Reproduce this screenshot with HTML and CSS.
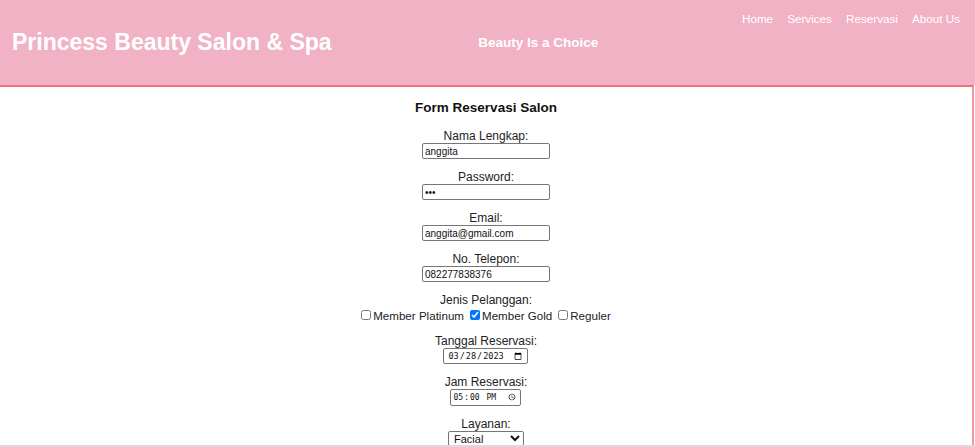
FILE: index.html
```html
<!DOCTYPE html>
<html lang="id">
<head>
<meta charset="utf-8">
<title>Princess Beauty Salon &amp; Spa</title>
<link rel="stylesheet" href="styles.css">
</head>
<body>
<header class="site-header">
  <h1 class="brand">Princess Beauty Salon &amp; Spa</h1>
  <p class="tagline">Beauty Is a Choice</p>
  <nav class="nav">
    <a href="#">Home</a>
    <a href="#">Services</a>
    <a href="#">Reservasi</a>
    <a href="#">About Us</a>
  </nav>
</header>
<main class="content">
  <h2 class="form-title">Form Reservasi Salon</h2>
  <form class="form">
    <div class="group">
      <label class="label" for="nama">Nama Lengkap:</label>
      <input class="field" id="nama" type="text" value="anggita">
    </div>
    <div class="group">
      <label class="label" for="pass">Password:</label>
      <input class="field" id="pass" type="password" value="123">
    </div>
    <div class="group">
      <label class="label" for="email">Email:</label>
      <input class="field" id="email" type="email" value="anggita@gmail.com">
    </div>
    <div class="group">
      <label class="label" for="tel">No. Telepon:</label>
      <input class="field" id="tel" type="tel" value="082277838376">
    </div>
    <div class="group">
      <span class="label">Jenis Pelanggan:</span>
      <div class="checks">
        <label class="check"><input type="checkbox">Member Platinum</label>
        <label class="check"><input type="checkbox" checked>Member Gold</label>
        <label class="check"><input type="checkbox">Reguler</label>
      </div>
    </div>
    <div class="group">
      <label class="label" for="tgl">Tanggal Reservasi:</label>
      <input class="field date" id="tgl" type="date" value="2023-03-28">
    </div>
    <div class="group">
      <label class="label" for="jam">Jam Reservasi:</label>
      <input class="field time" id="jam" type="time" value="17:00">
    </div>
    <div class="group">
      <label class="label" for="layanan">Layanan:</label>
      <select class="field select" id="layanan">
        <option>Facial</option>
        <option>Hair Spa</option>
        <option>Manicure</option>
      </select>
    </div>
  </form>
</main>
<div class="window-edge"></div>
</body>
</html>
```

FILE: styles.css
```css
html, body {
  margin: 0;
  padding: 0;
  background: #ffffff;
}

body {
  font-family: "Liberation Sans", Arial, sans-serif;
  color: #222222;
  overflow: hidden;
}

.site-header {
  display: flex;
  justify-content: space-between;
  align-items: center;
  height: 85px;
  padding: 0 15px 0 12px;
  background: #f1b2c5;
  color: #ffffff;
}

.brand {
  margin: 0;
  font-size: 23px;
  font-weight: bold;
}

.tagline {
  margin: 0 0 0 3px;
  font-size: 13.5px;
  font-weight: bold;
}

.nav {
  align-self: flex-start;
  margin-top: 12px;
  display: flex;
  gap: 14px;
}

.nav a {
  color: #ffffff;
  text-decoration: none;
  font-size: 11.7px;
}

.content {
  margin-right: 1px;
  border-top: 2px solid #f2707c;
  border-right: 2px solid #f3959d;
  min-height: 400px;
  display: flex;
  flex-direction: column;
  align-items: center;
}

.form-title {
  margin: 13px 0 13px;
  font-size: 13.5px;
  line-height: 16px;
  font-weight: bold;
  color: #111111;
}

.form {
  display: flex;
  flex-direction: column;
  align-items: center;
  gap: 11px;
}

.group {
  display: flex;
  flex-direction: column;
  align-items: center;
}

.label {
  font-size: 12px;
  line-height: 14px;
  color: #222222;
}

.field {
  box-sizing: border-box;
  width: 128px;
  height: 16px;
  margin: 0;
  padding: 0 2px;
  border: 1px solid #767676;
  border-radius: 2px;
  font-family: "Liberation Sans", Arial, sans-serif;
  font-size: 10px;
  color: #111111;
  background: #ffffff;
}

.date {
  width: 85px;
  padding: 0 3px;
  font-family: "DejaVu Sans Mono", monospace;
  font-size: 8.5px;
}

.time {
  width: 71px;
  height: 17px;
  padding: 0 1px;
  font-family: "DejaVu Sans Mono", monospace;
  font-size: 8px;
}

.select {
  width: 76px;
  height: 15px;
  font-size: 11px;
  padding: 0 1px;
}

.checks {
  display: flex;
  align-items: center;
  height: 16px;
  font-size: 11.6px;
  gap: 6px;
}

.check {
  display: flex;
  align-items: center;
  gap: 2px;
}

.check input {
  width: 10px;
  height: 10px;
  margin: 0;
}

.window-edge {
  position: fixed;
  left: 0;
  right: 0;
  bottom: 0;
  height: 2px;
  background: #e2d8d8;
}
```
